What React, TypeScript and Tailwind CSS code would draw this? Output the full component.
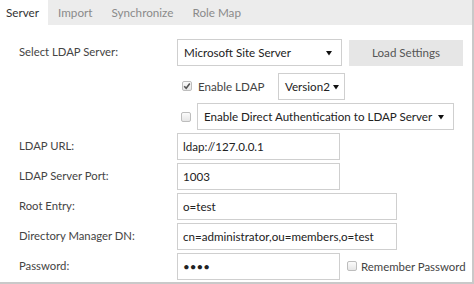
import React from "react";

const Arrow = () => (
  <svg width="6" height="6" viewBox="0 0 6 6" className="shrink-0">
    <path d="M0 1 L6 1 L3 5.5 Z" fill="#111" />
  </svg>
);

const Check = ({ checked }: { checked?: boolean }) => (
  <span className="inline-flex items-center justify-center w-[10px] h-[10px] border border-[#bdbdbd] rounded-[2px] bg-gradient-to-b from-[#fbfbfb] to-[#e6e6e6] shrink-0">
    {checked && (
      <svg width="8" height="8" viewBox="0 0 8 8">
        <path d="M1.2 4.2 L3.2 6.2 L6.8 1.6" fill="none" stroke="#555" strokeWidth="1.6" />
      </svg>
    )}
  </span>
);

const Select = ({ value, className }: { value: string; className: string }) => (
  <div
    className={`h-[27px] border border-[#cfcfcf] bg-white flex items-center justify-between whitespace-nowrap pl-[6px] pr-[9px] text-[11.6px] text-[#222] ${className}`}
  >
    <span>{value}</span>
    <Arrow />
  </div>
);

const Field = ({ value, w, type = "text" }: { value: string; w: string; type?: string }) => (
  <input
    readOnly
    type={type}
    value={value}
    className={`h-[27px] ${w} border border-[#cfcfcf] bg-white px-[5px] text-[11.6px] text-[#222] outline-none font-['Lato']`}
  />
);

const Row = ({ label, children, mt = "mt-[3px]" }: { label?: string; children: React.ReactNode; mt?: string }) => (
  <div className={`flex items-center h-[27px] ${mt}`}>
    <div className="w-[158px] shrink-0 text-[11.3px] text-[#444]">{label}</div>
    <div className="flex items-center">{children}</div>
  </div>
);

export default function App() {
  const tabs = ["Server", "Import", "Synchronize", "Role Map"];
  return (
    <div className="w-[474px] h-[284px] bg-white font-['Lato',sans-serif] overflow-hidden">
      <div className="w-[474px] h-[284px] border-r-2 border-b-2 border-[#c9c9c9]">
        <div className="flex h-[25px] bg-[#ececec]">
          {tabs.map((t, i) => (
            <div
              key={t}
              className={`flex items-center text-[11.7px] pr-[9px] ${
                i === 0 ? "bg-white text-[#333] pl-[6px]" : "text-[#8a8a8a] pl-[10px]"
              }`}
            >
              {t}
            </div>
          ))}
        </div>
        <div className="pl-[19px]">
          <Row label="Select LDAP Server:" mt="mt-[14px]">
            <Select value="Microsoft Site Server" className="w-[165px]" />
            <div className="ml-[7px] w-[114px] h-[26px] bg-[#e6e6e6] flex items-center justify-center text-[11.6px] text-[#555]">
              Load Settings
            </div>
          </Row>
          <Row mt="mt-[7px]">
            <div className="pl-[5px] flex items-center">
              <Check checked />
              <span className="ml-[6px] text-[11.6px] text-[#444] w-[75px]">Enable LDAP</span>
            </div>
            <Select value="Version2" className="ml-[5px] w-[67px] !pr-[5px]" />
          </Row>
          <Row>
            <div className="pl-[4px] flex items-center">
              <Check />
            </div>
            <Select value="Enable Direct Authentication to LDAP Server" className="ml-[6px] w-[257px]" />
          </Row>
          <Row label="LDAP URL:">
            <Field value="ldap://127.0.0.1" w="w-[163px]" />
          </Row>
          <Row label="LDAP Server Port:">
            <Field value="1003" w="w-[163px]" />
          </Row>
          <Row label="Root Entry:">
            <Field value="o=test" w="w-[220px]" />
          </Row>
          <Row label="Directory Manager DN:">
            <Field value="cn=administrator,ou=members,o=test" w="w-[220px]" />
          </Row>
          <Row label="Password:">
            <Field value="test" type="password" w="w-[163px]" />
            <div className="ml-[7px] flex items-center whitespace-nowrap">
              <Check />
              <span className="ml-[4px] text-[11.4px] text-[#444]">Remember Password</span>
            </div>
          </Row>
        </div>
      </div>
    </div>
  );
}
